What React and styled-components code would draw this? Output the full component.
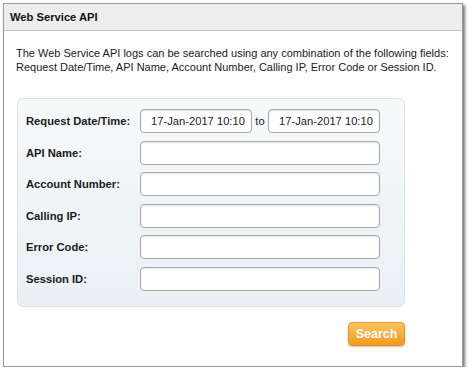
import React from "react";
import styled, { createGlobalStyle } from "styled-components";

const GlobalStyle = createGlobalStyle`
  body {
    margin: 0;
    background: #ffffff;
    font-family: "Liberation Sans", Arial, sans-serif;
  }
`;

const Panel = styled.div`
  margin: 3px 0 0 3px;
  width: 460px;
  height: 364px;
  box-sizing: border-box;
  border: 1px solid #9a9a9a;
  background: #ffffff;
  box-shadow: 2px 2px 3px rgba(0, 0, 0, 0.55);
  display: flex;
  flex-direction: column;
`;

const Header = styled.div`
  height: 26px;
  background: #ededed;
  border-bottom: 1px solid #c4c4c4;
  display: flex;
  align-items: center;
  padding-left: 6px;
  font-size: 11.2px;
  font-weight: bold;
  color: #111;
`;

const Body = styled.div`
  padding: 15px 0 0 12px;
  display: flex;
  flex-direction: column;
`;

const Intro = styled.p`
  margin: 0;
  font-size: 11px;
  line-height: 14px;
  color: #1a1a1a;
  white-space: nowrap;
`;

const FormBox = styled.div`
  margin: 24px 0 0 1px;
  width: 388px;
  height: 209px;
  box-sizing: border-box;
  border: 1px solid #dde4e8;
  border-radius: 6px;
  background: linear-gradient(#f6f9fa, #e9f0f3);
  padding: 10px 0 0 8px;
  display: flex;
  flex-direction: column;
  gap: 7.6px;
`;

const Row = styled.div`
  display: flex;
  align-items: center;
  height: 24px;
`;

const Label = styled.label`
  width: 114px;
  font-size: 11.2px;
  font-weight: bold;
  color: #1a1a1a;
`;

const Field = styled.input`
  width: ${(p) => p.$w}px;
  height: 24px;
  box-sizing: border-box;
  border: 1px solid #a9a9a9;
  border-radius: 4px;
  background: #ffffff;
  box-shadow: inset 0 1px 2px rgba(0, 0, 0, 0.12);
  padding: 0 0 0 10px;
  font-family: "Liberation Sans", Arial, sans-serif;
  font-size: 11.2px;
  color: #222;
  outline: none;
`;

const To = styled.span`
  width: 16px;
  text-align: center;
  font-size: 11.2px;
  color: #222;
`;

const Actions = styled.div`
  display: flex;
  justify-content: flex-end;
  width: 389px;
  margin-top: 15px;
`;

const SearchButton = styled.button`
  width: 57px;
  height: 24px;
  border: 1px solid #ec9420;
  border-radius: 4px;
  background: linear-gradient(#f9c560, #f29a1c);
  box-shadow: 0 1px 2px rgba(0, 0, 0, 0.25);
  color: #ffffff;
  font-family: "Liberation Sans", Arial, sans-serif;
  font-size: 12.5px;
  font-weight: bold;
  padding: 0;
`;

const fields = ["API Name:", "Account Number:", "Calling IP:", "Error Code:", "Session ID:"];

export default function App() {
  return (
    <>
      <GlobalStyle />
      <Panel>
        <Header>Web Service API</Header>
        <Body>
          <Intro>
            The Web Service API logs can be searched using any combination of the following fields:
            <br />
            Request Date/Time, API Name, Account Number, Calling IP, Error Code or Session ID.
          </Intro>
          <FormBox>
            <Row>
              <Label>Request Date/Time:</Label>
              <Field $w={112} defaultValue="17-Jan-2017 10:10" />
              <To>to</To>
              <Field $w={112} defaultValue="17-Jan-2017 10:10" />
            </Row>
            {fields.map((f) => (
              <Row key={f}>
                <Label>{f}</Label>
                <Field $w={240} />
              </Row>
            ))}
          </FormBox>
          <Actions>
            <SearchButton>Search</SearchButton>
          </Actions>
        </Body>
      </Panel>
    </>
  );
}
